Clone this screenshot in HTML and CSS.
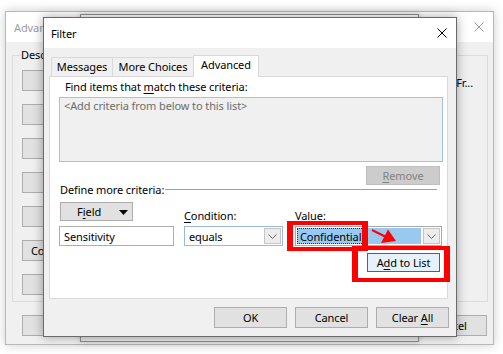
FILE: index.html
```html
<!DOCTYPE html>
<html>
<head>
<meta charset="utf-8">
<link rel="stylesheet" href="styles.css">
</head>
<body>
<div class="win back">
  <div class="tb tb-inactive">
    <span class="ttl">Advanced View Settings: Compact</span>
    <svg class="x" width="10" height="10" viewBox="0 0 10 10"><path d="M0.5 0.5 L9.5 9.5 M9.5 0.5 L0.5 9.5" stroke="#9a9a9a" stroke-width="1" fill="none"/></svg>
  </div>
  <div class="back-body">
    <fieldset class="grp">
      <legend>Description</legend>
      <div class="grp-row"><span class="bbtn">Columns...</span><span class="desc">Importance, Reminder, Icon, Flag Status, Attachment, Fr...</span></div>
      <div class="grp-row"><span class="bbtn">Group By...</span></div>
      <div class="grp-row"><span class="bbtn">Sort...</span></div>
      <div class="grp-row"><span class="bbtn">Filter...</span></div>
      <div class="grp-row"><span class="bbtn">Other Settings...</span></div>
      <div class="grp-row"><span class="bbtn">Conditional Formatting...</span></div>
      <div class="grp-row"><span class="bbtn">Format Columns...</span></div>
    </fieldset>
    <div class="back-btns">
      <span class="bbtn wide">Reset Current View</span>
      <span class="spacer"></span>
      <span class="bbtn small">OK</span>
      <span class="bbtn small">Cancel</span>
    </div>
  </div>
</div>

<div class="win mid">
  <div class="mid-tb"></div>
</div>

<div class="win filter">
  <div class="tb">
    <span class="ttl">Filter</span>
    <svg class="x fx" width="10" height="10" viewBox="0 0 10 10"><path d="M0.5 0.5 L9.5 9.5 M9.5 0.5 L0.5 9.5" stroke="#000" stroke-width="1" fill="none"/></svg>
  </div>
  <div class="fbody">
    <div class="tabs">
      <div class="tab t1">Messages</div>
      <div class="tab t2">More Choices</div>
      <div class="tab t3 sel">Advanced</div>
    </div>
    <div class="panel">
      <div class="lbl find">Find items that <span class="u">m</span>atch these criteria:</div>
      <div class="listbox">&lt;Add criteria from below to this list&gt;</div>
      <div class="btn remove"><span><span class="u">R</span>emove</span></div>
      <div class="define"><span class="lbl">Define more criteria:</span><span class="rule"></span></div>
      <div class="crit">
        <div class="col c1">
          <div class="btn field"><span class="ftxt">F<span class="u">i</span>eld</span><svg class="tri" width="9" height="5" viewBox="0 0 9 5"><path d="M0 0 H9 L4.5 5 Z" fill="#000"/></svg></div>
          <div class="inp">Sensitivity</div>
        </div>
        <div class="col c2">
          <div class="lbl"><span class="u">C</span>ondition:</div>
          <div class="inp combo cond"><span class="ctxt">equals</span><span class="dd"><svg width="9" height="5" viewBox="0 0 9 5"><path d="M0.5 0.5 L4.5 4.5 L8.5 0.5" stroke="#666" fill="none"/></svg></span></div>
        </div>
        <div class="col c3">
          <div class="lbl">Value:</div>
          <div class="inp combo val"><span class="selbar"><span class="focus">Confidential</span></span><span class="dd"><svg width="9" height="5" viewBox="0 0 9 5"><path d="M0.5 0.5 L4.5 4.5 L8.5 0.5" stroke="#666" fill="none"/></svg></span></div>
        </div>
      </div>
      <div class="btn add"><span>A<span class="u">d</span>d to List</span></div>
    </div>
    <div class="fbtns">
      <div class="btn fb">OK</div>
      <div class="btn fb">Cancel</div>
      <div class="btn fb"><span>Clear <span class="u">A</span>ll</span></div>
    </div>
  </div>
</div>

<div class="mark m1"></div>
<div class="mark m2"></div>
<svg class="arrow" width="30" height="20" viewBox="0 0 30 20"><path d="M2 4 L16 11" stroke="#ff0000" stroke-width="2" fill="none"/><path d="M26 15 L18 3.5 L11 17 Z" fill="#ff0000"/></svg>
</body>
</html>
```

FILE: styles.css
```css
* { box-sizing: border-box; }
html, body { margin: 0; padding: 0; }
body {
  width: 503px;
  height: 354px;
  overflow: hidden;
  position: relative;
  background: #ffffff;
  font-family: "Noto Sans", "Segoe UI", sans-serif;
  font-size: 11px;
  line-height: 15px;
  color: #000;
  letter-spacing: -0.1px;
}
.u { text-decoration: underline; text-underline-offset: 2px; text-decoration-thickness: 1px; }

.win { position: absolute; display: flex; flex-direction: column; border: 1px solid; }
.tb { height: 30px; background: #fff; display: flex; align-items: center; justify-content: space-between; padding-left: 8px; flex: none; }
.tb-inactive { color: #9d9d9d; }
.x { margin-right: 9px; }

/* background dialog */
.back {
  left: 5px; top: 11px; width: 489px; height: 334px;
  border-color: #b8b8b8;
  background: #f0f0f0;
  box-shadow: 0 0 10px rgba(0,0,0,0.2);
}
.back-body { padding: 0 5px 0 6px; display: flex; flex-direction: column; }
.grp {
  margin: 6px 0 0 0;
  padding: 8px 14px 0 9px;
  border: 1px solid #dcdcdc;
  height: 254px;
  min-width: 0;
  display: flex; flex-direction: column; gap: 13px;
}
.grp legend { padding: 0; margin-left: -1px; line-height: 14px; }
.grp-row { display: flex; align-items: center; height: 21px; }
.bbtn {
  width: 144px; height: 21px; flex: none;
  border: 1px solid #adadad; background: #e1e1e1;
  display: flex; align-items: center; justify-content: center;
  white-space: nowrap; overflow: hidden;
}
.desc { flex: 1; min-width: 0; text-align: right; white-space: nowrap; overflow: hidden; padding-top: 4px; }
.back-btns { display: flex; margin: 13px 1px 0 10px; gap: 8px; }
.bbtn.wide { width: 150px; }
.bbtn.small { width: 74px; }
.spacer { flex: 1; }

/* middle window */
.mid {
  left: 80px; top: 14px; width: 339px; height: 328px;
  border-color: #8e8e8e;
  background: #e6e6e6;
  box-shadow: 0 0 6px rgba(0,0,0,0.2);
}
.mid-tb { height: 30px; background: #fff; }

/* filter dialog */
.filter {
  left: 43px; top: 17px; width: 414px; height: 320px;
  border-color: #6a6a6a;
  background: #f0f0f0;
  box-shadow: 0 0 10px rgba(0,0,0,0.35);
}
.filter .tb { padding-left: 7px; }
.fbody { padding: 7px 0 0 5px; display: flex; flex-direction: column; }
.tabs { display: flex; align-items: flex-end; height: 21px; padding-left: 2px; }
.tab {
  height: 19px; border: 1px solid #d9d9d9; border-bottom: none;
  background: #f0f0f0;
  display: flex; align-items: center; justify-content: center;
  padding-bottom: 1px;
}
.t1 { width: 62px; }
.t2 { width: 82px; margin-left: -1px; }
.t3 { width: 66px; margin-left: -1px; }
.tab.sel {
  height: 22px; background: #fff; margin-bottom: -1px;
  position: relative; z-index: 1;
  padding-bottom: 5px;
}
.panel {
  width: 399px; height: 223px;
  background: #fff; border: 1px solid #d9d9d9;
  display: flex; flex-direction: column;
  padding: 0 4px 0 9px;
}
.lbl { white-space: nowrap; }
.find { margin: 2px 0 0 6px; }
.listbox {
  margin-top: 3px; height: 65px;
  border: 1px solid #a2c3e6; background: #f0f0f0;
  color: #6d6d6d; padding: 0 0 0 4px;
}
.btn {
  display: flex; align-items: center; justify-content: center;
  border: 1px solid #adadad; background: #e1e1e1;
  white-space: nowrap;
}
.remove {
  align-self: flex-end; margin: 4px 3px 0 0;
  width: 74px; height: 19px;
  background: #cccccc; border-color: #bfbfbf; color: #838383;
}
.define { display: flex; align-items: center; margin-top: -3px; margin-left: 1px; }
.rule { flex: 1; border-top: 1px solid #a0a0a0; margin: 0 6px 0 1px; height: 0; }
.crit { display: flex; align-items: flex-end; margin-top: 5px; }
.col { display: flex; flex-direction: column; flex: none; }
.c1 { width: 115px; }
.c2 { width: 99px; margin-left: 10px; }
.c3 { width: 147px; margin-left: 12px; }
.field {
  width: 73px; height: 19px; margin: 0 0 5px 1px;
  justify-content: flex-start; padding-left: 16px;
}
.ftxt { margin-right: 18px; letter-spacing: 0; }
.tri { margin-top: 1px; }
.c2 .lbl, .c3 .lbl { margin-bottom: 3px; }
.inp {
  height: 20px; border: 1px solid #adadad; background: #fff;
  padding-left: 4px; display: flex; align-items: center;
}
.combo { padding: 1px; }
.cond { border-color: #9bb7dc; }
.ctxt { flex: 1; padding-left: 3px; }
.dd {
  width: 17px; height: 100%; flex: none;
  background: #ececec; border: 1px solid #c4c4c4;
  display: flex; align-items: center; justify-content: center;
}
.val { border-color: #a9a9a9; }
.selbar {
  flex: 1; height: 100%; background: #99c9ef; margin-right: 2px;
  display: flex; align-items: center; padding-left: 0;
}
.focus { border: 1px dotted #333; padding: 0 2px; line-height: 13px; height: 100%; display: flex; align-items: center; }
.add {
  align-self: flex-end; margin: 7px 3px 0 0;
  width: 73px; height: 19px;
  border-color: #0078d7; background: #e5f1fb;
}
.fbtns { display: flex; justify-content: flex-end; gap: 8px; margin-top: 8px; padding-right: 7px; }
.fb { width: 73px; height: 21px; }

/* annotations */
.mark { position: absolute; border: solid #ff0000; border-width: 4px 6px; }
.m1 { left: 287px; top: 221px; width: 81px; height: 30px; }
.m2 { left: 352px; top: 246px; width: 98px; height: 36px; }
.arrow { position: absolute; left: 370px; top: 226px; }
```
